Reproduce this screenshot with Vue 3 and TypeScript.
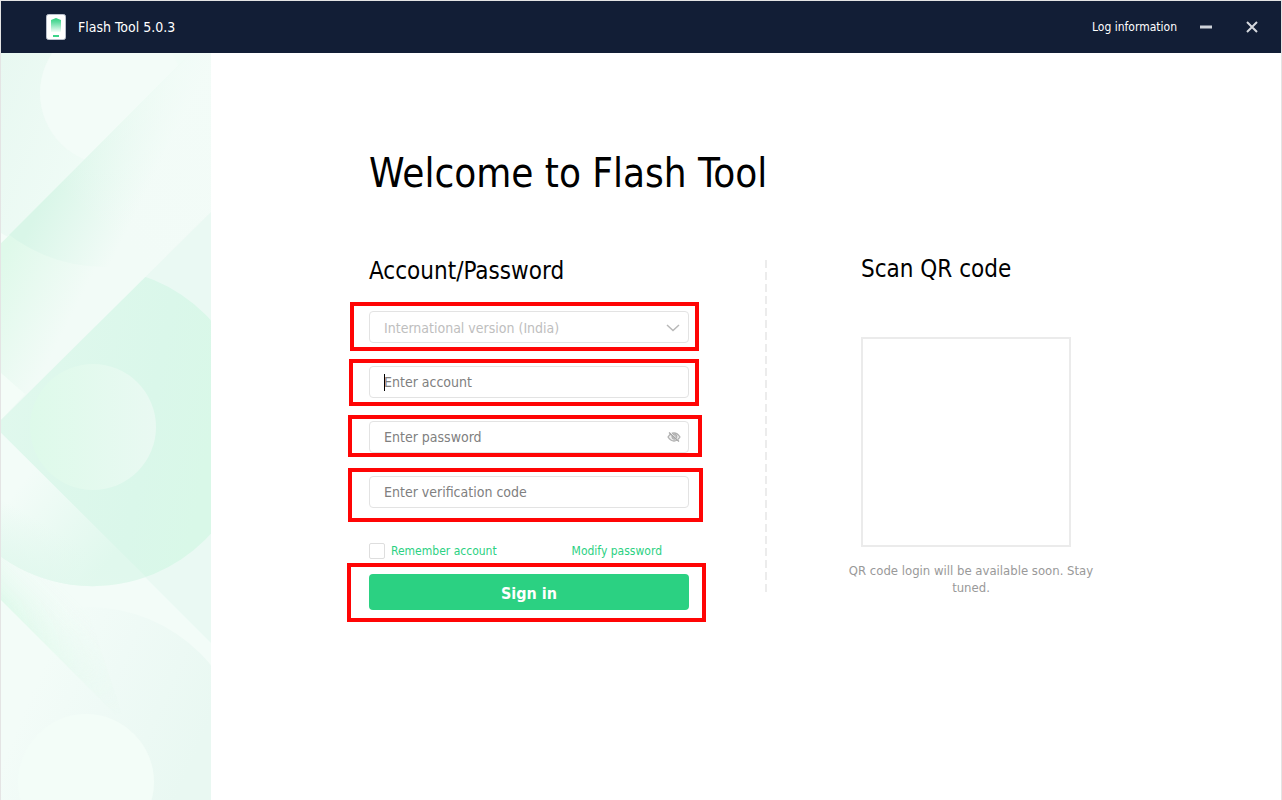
<script setup lang="ts">
import { ref } from 'vue'

const region = ref<string>('india')
const account = ref<string>('')
const password = ref<string>('')
const code = ref<string>('')
const remember = ref<boolean>(false)
</script>

<template>
  <div class="window">
    <header class="titlebar">
      <svg class="logo" width="20" height="26" viewBox="0 0 20 26" aria-hidden="true">
        <defs>
          <linearGradient id="logoFill" x1="0" y1="0" x2="0" y2="1">
            <stop offset="0" stop-color="#2fd07f" />
            <stop offset="0.3" stop-color="#5fdca0" />
            <stop offset="1" stop-color="#f4fdf8" />
          </linearGradient>
        </defs>
        <rect x="0.5" y="0.5" width="19" height="25" rx="2" fill="#fff" stroke="#b9c0cc" />
        <path d="M5 6 L10 4 L15 6 V18 H5 Z" fill="url(#logoFill)" />
        <rect x="7" y="21" width="6" height="2" fill="#3bd489" />
      </svg>
      <span class="app-name">Flash Tool 5.0.3</span>
      <button class="log" type="button">Log information</button>
      <button class="win-btn minimize" type="button" aria-label="Minimize">
        <svg width="12" height="12" viewBox="0 0 12 12"><path d="M0 6H12" stroke="#cfd3da" stroke-width="3" /></svg>
      </button>
      <button class="win-btn" type="button" aria-label="Close">
        <svg width="12" height="12" viewBox="0 0 12 12"><path d="M1 1L11 11M11 1L1 11" stroke="#d5d8de" stroke-width="2" /></svg>
      </button>
    </header>

    <div class="body">
      <aside class="art">
        <svg viewBox="1 53 210 747" preserveAspectRatio="xMinYMin slice" aria-hidden="true">
          <defs>
            <linearGradient id="corner" gradientUnits="userSpaceOnUse" x1="1" y1="60" x2="130" y2="110">
              <stop offset="0" stop-color="#e8f8f1" />
              <stop offset="1" stop-color="#f1fcf7" />
            </linearGradient>
            <linearGradient id="bandTop" gradientUnits="userSpaceOnUse" x1="45" y1="195" x2="125" y2="235">
              <stop offset="0" stop-color="#d9f6e8" />
              <stop offset="1" stop-color="#f2fbf7" />
            </linearGradient>
            <linearGradient id="bandTopFade" gradientUnits="userSpaceOnUse" x1="60" y1="190" x2="180" y2="70">
              <stop offset="0" stop-color="#f3fcf8" stop-opacity="0" />
              <stop offset="1" stop-color="#f3fcf8" stop-opacity="0.8" />
            </linearGradient>
            <linearGradient id="bandLow" gradientUnits="userSpaceOnUse" x1="1" y1="260" x2="80" y2="300">
              <stop offset="0" stop-color="#dff9ea" />
              <stop offset="1" stop-color="#f2fbf7" />
            </linearGradient>
            <linearGradient id="disc" gradientUnits="userSpaceOnUse" x1="1" y1="400" x2="211" y2="440">
              <stop offset="0" stop-color="#e0f8ed" />
              <stop offset="0.7" stop-color="#daf7ea" />
              <stop offset="1" stop-color="#d9f8e8" />
            </linearGradient>
            <linearGradient id="inner" x1="0" y1="0" x2="1" y2="0">
              <stop offset="0" stop-color="#defaea" />
              <stop offset="1" stop-color="#e9f9f2" />
            </linearGradient>
            <linearGradient id="wedge" gradientUnits="userSpaceOnUse" x1="20" y1="485" x2="110" y2="560">
              <stop offset="0" stop-color="#f3fcf8" />
              <stop offset="1" stop-color="#e0f8ed" />
            </linearGradient>
            <linearGradient id="wedgeLeft" gradientUnits="userSpaceOnUse" x1="1" y1="565" x2="30" y2="515">
              <stop offset="0" stop-color="#e2f8ee" />
              <stop offset="1" stop-color="#e2f8ee" stop-opacity="0" />
            </linearGradient>
            <linearGradient id="tail" gradientUnits="userSpaceOnUse" x1="20" y1="619" x2="58" y2="581">
              <stop offset="0" stop-color="#dff9eb" />
              <stop offset="1" stop-color="#f3fcf8" stop-opacity="0" />
            </linearGradient>
            <linearGradient id="tailFade" gradientUnits="userSpaceOnUse" x1="0" y1="600" x2="0" y2="715">
              <stop offset="0" stop-color="#fff" />
              <stop offset="1" stop-color="#000" />
            </linearGradient>
            <mask id="tailMask" maskUnits="userSpaceOnUse" x="1" y="540" width="210" height="200">
              <rect x="1" y="540" width="210" height="200" fill="url(#tailFade)" />
            </mask>
            <linearGradient id="lowDisc" gradientUnits="userSpaceOnUse" x1="50" y1="650" x2="211" y2="720">
              <stop offset="0" stop-color="#f3fcf8" />
              <stop offset="0.4" stop-color="#effaf6" />
              <stop offset="1" stop-color="#e9f8f2" />
            </linearGradient>
            <clipPath id="bandClip"><path d="M1 243L191 53H211V212L1 420Z" /></clipPath>
            <clipPath id="rightClip"><path d="M211 212L1 420V433L211 643Z" /></clipPath>
          </defs>
          <rect x="1" y="53" width="210" height="747" fill="#f3fcf8" />
          <path d="M1 53H191L1 243Z" fill="url(#corner)" />
          <path d="M1 233L8 237L1 243Z" fill="#f5fdf9" />
          <circle cx="112" cy="93" r="72" fill="#f3fcf8" />
          <g clip-path="url(#bandClip)">
            <path d="M1 243L191 53H211V212L1 420Z" fill="url(#bandLow)" />
            <circle cx="105" cy="108" r="159" fill="url(#bandTop)" />
            <rect x="1" y="53" width="210" height="214" fill="url(#bandTopFade)" />
            <path d="M1 373L25 394L1 420Z" fill="#f4fdf8" />
          </g>
          <path d="M211 212L1 420V433L211 643Z" fill="#eaf9f3" />
          <circle cx="93" cy="427" r="159" fill="url(#disc)" clip-path="url(#rightClip)" />
          <circle cx="93" cy="427" r="63" fill="url(#inner)" clip-path="url(#rightClip)" />
          <path d="M1 433L146 577A159 159 0 0 1 1 557Z" fill="url(#wedge)" />
          <path d="M1 433L146 577A159 159 0 0 1 1 557Z" fill="url(#wedgeLeft)" />
          <circle cx="88" cy="766" r="159" fill="url(#lowDisc)" />
          <path d="M1 600V557A159 159 0 0 0 80 586L125 724Z" fill="url(#tail)" mask="url(#tailMask)" />
          <circle cx="86" cy="782" r="68" fill="#f3fdf8" />
        </svg>
      </aside>

      <main class="content">
        <h1>Welcome to Flash Tool</h1>
        <div class="columns">
          <form class="login" @submit.prevent>
            <h2>Account/Password</h2>
            <div class="fields">
              <div class="field mark mark-region">
                <select v-model="region" class="control region" aria-label="Version">
                  <option value="india">International version (India)</option>
                </select>
                <svg class="chevron" width="14" height="8" viewBox="0 0 14 8" aria-hidden="true"><path d="M1 1L7 6.5L13 1" fill="none" stroke="#b8b8b8" stroke-width="1.5" /></svg>
              </div>
              <div class="field mark mark-account">
                <input v-model="account" class="control" type="text" placeholder="Enter account" aria-label="Account" />
                <span class="caret"></span>
              </div>
              <div class="field mark mark-password">
                <input v-model="password" class="control" type="password" placeholder="Enter password" aria-label="Password" />
                <button class="eye" type="button" aria-label="Show password">
                  <svg width="14" height="10" viewBox="0 0 14 10">
                    <path d="M1 5C3 2 5 1 7 1S11 2 13 5C11 8 9 9 7 9S3 8 1 5Z" fill="#f0f0f0" stroke="#b0b0b0" stroke-width="1.3" />
                    <circle cx="7.4" cy="4.8" r="2.5" fill="#c4c4c4" stroke="#acacac" />
                    <path d="M3 0L12 9" stroke="#fff" stroke-width="1" />
                    <path d="M2 0.5L12 9.5" stroke="#a6a6a6" stroke-width="1.3" />
                  </svg>
                </button>
              </div>
              <div class="field mark mark-code">
                <input v-model="code" class="control" type="text" placeholder="Enter verification code" aria-label="Verification code" />
              </div>
            </div>
            <div class="options">
              <label class="remember"><input v-model="remember" type="checkbox" />Remember account</label>
              <a href="#">Modify password</a>
            </div>
            <div class="mark mark-submit">
              <button class="submit" type="submit">Sign in</button>
            </div>
          </form>
          <div class="divider"></div>
          <section class="qr">
            <h2>Scan QR code</h2>
            <div class="qr-box"></div>
            <p>QR code login will be available soon. Stay tuned.</p>
          </section>
        </div>
      </main>
    </div>
  </div>
</template>

<style>
body {
  margin: 0;
  background: #fff;
}
</style>

<style scoped>
.window,
.window * {
  box-sizing: border-box;
}
.window {
  display: flex;
  flex-direction: column;
  min-height: 100vh;
  border: 1px solid #e4e4e4;
  border-bottom: 0;
  background: #fff;
  color: #000;
  font-family: Tahoma, "DejaVu Sans Condensed", "Noto Sans", sans-serif;
  font-size: 14px;
}
button,
input,
select {
  font: inherit;
}
button {
  padding: 0;
  border: 0;
  background: none;
  cursor: pointer;
}
.titlebar {
  display: flex;
  align-items: center;
  height: 52px;
  padding: 0 23px 0 45px;
  background: #121e36;
  color: #fff;
}
.logo {
  margin-right: 12px;
}
.log {
  margin-left: auto;
  margin-right: 23px;
  color: #fff;
  font-size: 12px;
}
.win-btn {
  display: flex;
}
.minimize {
  margin-right: 34px;
}
.body {
  display: flex;
  flex: 1;
}
.art {
  position: relative;
  flex: 0 0 210px;
  overflow: hidden;
}
.art svg {
  position: absolute;
  inset: 0;
  width: 100%;
  height: 100%;
}
.content {
  flex: 1;
  padding: 92px 24px 32px 158px;
}
h1,
h2,
p {
  margin: 0;
  font-weight: 400;
}
h1 {
  font-size: 40px;
  line-height: 56px;
}
h2 {
  font-size: 24px;
  line-height: 32px;
}
.columns {
  display: flex;
  align-items: flex-start;
  margin-top: 52px;
}
.login {
  width: 320px;
  padding-top: 2px;
}
.fields {
  display: grid;
  gap: 23px;
  margin-top: 24px;
}
.field {
  height: 32px;
}
.control {
  display: block;
  width: 100%;
  height: 32px;
  padding: 0 14px;
  border: 1px solid #e3e3e3;
  border-radius: 4px;
  outline: 0;
  background: #fff;
  color: #333;
}
.control::placeholder {
  color: #808080;
  opacity: 1;
}
.region {
  appearance: none;
  padding-top: 2px;
  color: #bebebe;
}
.chevron {
  position: absolute;
  top: 13px;
  right: 9px;
  pointer-events: none;
}
.caret {
  position: absolute;
  top: 8px;
  left: 15px;
  width: 1px;
  height: 17px;
  background: #000;
}
.eye {
  position: absolute;
  top: 11px;
  right: 8px;
  display: flex;
}
.mark {
  position: relative;
}
.mark::after {
  content: "";
  position: absolute;
  border: 4px solid #ff0505;
  pointer-events: none;
}
.mark-region::after {
  inset: -9px -10px -8px -19px;
}
.mark-account::after {
  inset: -7px -10px -8px -20px;
}
.mark-password::after {
  inset: -6px -13px -4px -21px;
}
.mark-code::after {
  inset: -8px -14px -14px -21px;
}
.mark-submit::after {
  inset: -11px -17px -12px -22px;
}
.options {
  display: flex;
  justify-content: space-between;
  align-items: center;
  height: 16px;
  margin: 35px 0 15px;
  padding-right: 27px;
  color: #2bd182;
  font-size: 12px;
}
.options a {
  color: inherit;
  text-decoration: none;
}
.remember {
  display: flex;
  align-items: center;
  gap: 6px;
}
.remember input {
  appearance: none;
  width: 16px;
  height: 16px;
  margin: 0;
  border: 1px solid #dedede;
  border-radius: 2px;
  background: #fff;
}
.remember input:checked {
  background: #2bd182;
}
.submit {
  display: block;
  width: 100%;
  height: 36px;
  padding-top: 2px;
  border-radius: 4px;
  background: #2bd182;
  color: #fff;
  font-size: 16px;
  font-weight: 700;
}
.divider {
  align-self: stretch;
  width: 2px;
  margin: 7px 74px 18px 76px;
  background: repeating-linear-gradient(#ececec 0 8px, transparent 8px 12px);
}
.qr {
  width: 260px;
}
.qr h2,
.qr-box {
  margin-left: 20px;
}
.qr-box {
  width: 210px;
  height: 210px;
  margin-top: 52px;
  border: 2px solid #ebebeb;
}
.qr p {
  margin-top: 15px;
  color: #999;
  font-size: 13px;
  line-height: 17px;
  text-align: center;
}
</style>
